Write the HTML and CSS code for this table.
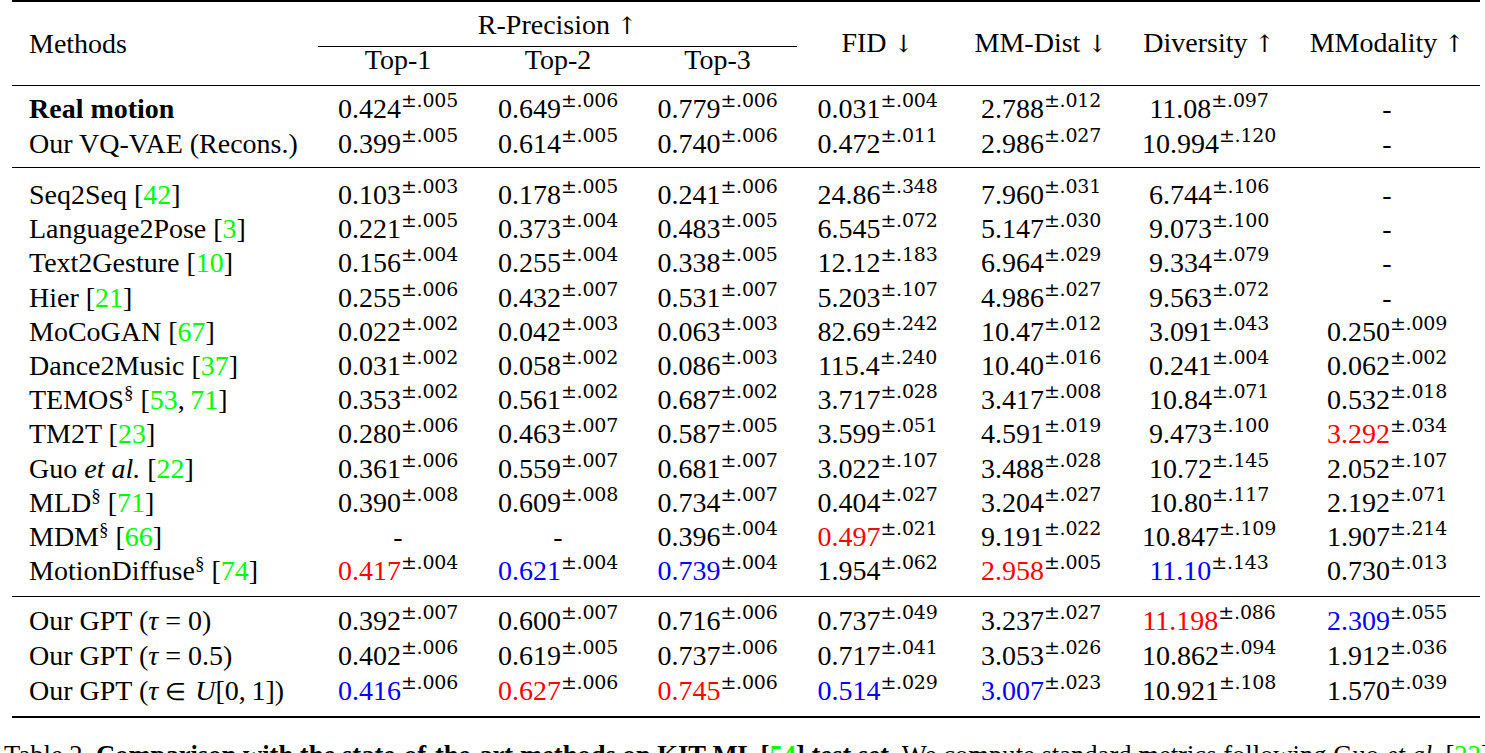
FILE: index.html
```html
<!DOCTYPE html>
<html lang="en">
<head>
<meta charset="utf-8">
<title>Table 2</title>
<link rel="stylesheet" href="styles.css">
</head>
<body>
<div class="page">
<table class="results">
  <colgroup>
    <col class="c-method">
    <col class="c-top1">
    <col class="c-top2">
    <col class="c-top3">
    <col class="c-fid">
    <col class="c-mmd">
    <col class="c-div">
    <col class="c-mmod">
  </colgroup>
  <thead>
    <tr class="h1">
      <th rowspan="2" class="method">Methods</th>
      <th colspan="3" class="group">R-Precision <span class="arr">&#8593;&#xFE0E;</span></th>
      <th rowspan="2">FID <span class="arr">&#8595;&#xFE0E;</span></th>
      <th rowspan="2">MM-Dist <span class="arr">&#8595;&#xFE0E;</span></th>
      <th rowspan="2">Diversity <span class="arr">&#8593;&#xFE0E;</span></th>
      <th rowspan="2">MModality <span class="arr">&#8593;&#xFE0E;</span></th>
    </tr>
    <tr class="h2">
      <th>Top-1</th>
      <th>Top-2</th>
      <th>Top-3</th>
    </tr>
  </thead>
  <tbody class="ga">
    <tr>
      <td class="method"><b>Real motion</b></td>
      <td><span>0.424</span><sup>±.005</sup></td>
      <td><span>0.649</span><sup>±.006</sup></td>
      <td><span>0.779</span><sup>±.006</sup></td>
      <td><span>0.031</span><sup>±.004</sup></td>
      <td><span>2.788</span><sup>±.012</sup></td>
      <td><span>11.08</span><sup>±.097</sup></td>
      <td>-</td>
    </tr>
    <tr>
      <td class="method">Our VQ-VAE (Recons.)</td>
      <td><span>0.399</span><sup>±.005</sup></td>
      <td><span>0.614</span><sup>±.005</sup></td>
      <td><span>0.740</span><sup>±.006</sup></td>
      <td><span>0.472</span><sup>±.011</sup></td>
      <td><span>2.986</span><sup>±.027</sup></td>
      <td><span>10.994</span><sup>±.120</sup></td>
      <td>-</td>
    </tr>
  </tbody>
  <tbody class="gb">
    <tr>
      <td class="method">Seq2Seq [<span class="cite">42</span>]</td>
      <td><span>0.103</span><sup>±.003</sup></td>
      <td><span>0.178</span><sup>±.005</sup></td>
      <td><span>0.241</span><sup>±.006</sup></td>
      <td><span>24.86</span><sup>±.348</sup></td>
      <td><span>7.960</span><sup>±.031</sup></td>
      <td><span>6.744</span><sup>±.106</sup></td>
      <td>-</td>
    </tr>
    <tr>
      <td class="method">Language2Pose [<span class="cite">3</span>]</td>
      <td><span>0.221</span><sup>±.005</sup></td>
      <td><span>0.373</span><sup>±.004</sup></td>
      <td><span>0.483</span><sup>±.005</sup></td>
      <td><span>6.545</span><sup>±.072</sup></td>
      <td><span>5.147</span><sup>±.030</sup></td>
      <td><span>9.073</span><sup>±.100</sup></td>
      <td>-</td>
    </tr>
    <tr>
      <td class="method">Text2Gesture [<span class="cite">10</span>]</td>
      <td><span>0.156</span><sup>±.004</sup></td>
      <td><span>0.255</span><sup>±.004</sup></td>
      <td><span>0.338</span><sup>±.005</sup></td>
      <td><span>12.12</span><sup>±.183</sup></td>
      <td><span>6.964</span><sup>±.029</sup></td>
      <td><span>9.334</span><sup>±.079</sup></td>
      <td>-</td>
    </tr>
    <tr>
      <td class="method">Hier [<span class="cite">21</span>]</td>
      <td><span>0.255</span><sup>±.006</sup></td>
      <td><span>0.432</span><sup>±.007</sup></td>
      <td><span>0.531</span><sup>±.007</sup></td>
      <td><span>5.203</span><sup>±.107</sup></td>
      <td><span>4.986</span><sup>±.027</sup></td>
      <td><span>9.563</span><sup>±.072</sup></td>
      <td>-</td>
    </tr>
    <tr>
      <td class="method">MoCoGAN [<span class="cite">67</span>]</td>
      <td><span>0.022</span><sup>±.002</sup></td>
      <td><span>0.042</span><sup>±.003</sup></td>
      <td><span>0.063</span><sup>±.003</sup></td>
      <td><span>82.69</span><sup>±.242</sup></td>
      <td><span>10.47</span><sup>±.012</sup></td>
      <td><span>3.091</span><sup>±.043</sup></td>
      <td><span>0.250</span><sup>±.009</sup></td>
    </tr>
    <tr>
      <td class="method">Dance2Music [<span class="cite">37</span>]</td>
      <td><span>0.031</span><sup>±.002</sup></td>
      <td><span>0.058</span><sup>±.002</sup></td>
      <td><span>0.086</span><sup>±.003</sup></td>
      <td><span>115.4</span><sup>±.240</sup></td>
      <td><span>10.40</span><sup>±.016</sup></td>
      <td><span>0.241</span><sup>±.004</sup></td>
      <td><span>0.062</span><sup>±.002</sup></td>
    </tr>
    <tr>
      <td class="method">TEMOS<sup class="sec">§</sup> [<span class="cite">53</span>,&#8201;<span class="cite">71</span>]</td>
      <td><span>0.353</span><sup>±.002</sup></td>
      <td><span>0.561</span><sup>±.002</sup></td>
      <td><span>0.687</span><sup>±.002</sup></td>
      <td><span>3.717</span><sup>±.028</sup></td>
      <td><span>3.417</span><sup>±.008</sup></td>
      <td><span>10.84</span><sup>±.071</sup></td>
      <td><span>0.532</span><sup>±.018</sup></td>
    </tr>
    <tr>
      <td class="method">TM2T [<span class="cite">23</span>]</td>
      <td><span>0.280</span><sup>±.006</sup></td>
      <td><span>0.463</span><sup>±.007</sup></td>
      <td><span>0.587</span><sup>±.005</sup></td>
      <td><span>3.599</span><sup>±.051</sup></td>
      <td><span>4.591</span><sup>±.019</sup></td>
      <td><span>9.473</span><sup>±.100</sup></td>
      <td><span class="red">3.292</span><sup>±.034</sup></td>
    </tr>
    <tr>
      <td class="method">Guo <i>et al.</i> [<span class="cite">22</span>]</td>
      <td><span>0.361</span><sup>±.006</sup></td>
      <td><span>0.559</span><sup>±.007</sup></td>
      <td><span>0.681</span><sup>±.007</sup></td>
      <td><span>3.022</span><sup>±.107</sup></td>
      <td><span>3.488</span><sup>±.028</sup></td>
      <td><span>10.72</span><sup>±.145</sup></td>
      <td><span>2.052</span><sup>±.107</sup></td>
    </tr>
    <tr>
      <td class="method">MLD<sup class="sec">§</sup> [<span class="cite">71</span>]</td>
      <td><span>0.390</span><sup>±.008</sup></td>
      <td><span>0.609</span><sup>±.008</sup></td>
      <td><span>0.734</span><sup>±.007</sup></td>
      <td><span>0.404</span><sup>±.027</sup></td>
      <td><span>3.204</span><sup>±.027</sup></td>
      <td><span>10.80</span><sup>±.117</sup></td>
      <td><span>2.192</span><sup>±.071</sup></td>
    </tr>
    <tr>
      <td class="method">MDM<sup class="sec">§</sup> [<span class="cite">66</span>]</td>
      <td>-</td>
      <td>-</td>
      <td><span>0.396</span><sup>±.004</sup></td>
      <td><span class="red">0.497</span><sup>±.021</sup></td>
      <td><span>9.191</span><sup>±.022</sup></td>
      <td><span>10.847</span><sup>±.109</sup></td>
      <td><span>1.907</span><sup>±.214</sup></td>
    </tr>
    <tr>
      <td class="method">MotionDiffuse<sup class="sec">§</sup> [<span class="cite">74</span>]</td>
      <td><span class="red">0.417</span><sup>±.004</sup></td>
      <td><span class="blue">0.621</span><sup>±.004</sup></td>
      <td><span class="blue">0.739</span><sup>±.004</sup></td>
      <td><span>1.954</span><sup>±.062</sup></td>
      <td><span class="red">2.958</span><sup>±.005</sup></td>
      <td><span class="blue">11.10</span><sup>±.143</sup></td>
      <td><span>0.730</span><sup>±.013</sup></td>
    </tr>
  </tbody>
  <tbody class="gc">
    <tr>
      <td class="method">Our GPT (<i class="m">τ</i> = 0)</td>
      <td><span>0.392</span><sup>±.007</sup></td>
      <td><span>0.600</span><sup>±.007</sup></td>
      <td><span>0.716</span><sup>±.006</sup></td>
      <td><span>0.737</span><sup>±.049</sup></td>
      <td><span>3.237</span><sup>±.027</sup></td>
      <td><span class="red">11.198</span><sup>±.086</sup></td>
      <td><span class="blue">2.309</span><sup>±.055</sup></td>
    </tr>
    <tr>
      <td class="method">Our GPT (<i class="m">τ</i> = 0.5)</td>
      <td><span>0.402</span><sup>±.006</sup></td>
      <td><span>0.619</span><sup>±.005</sup></td>
      <td><span>0.737</span><sup>±.006</sup></td>
      <td><span>0.717</span><sup>±.041</sup></td>
      <td><span>3.053</span><sup>±.026</sup></td>
      <td><span>10.862</span><sup>±.094</sup></td>
      <td><span>1.912</span><sup>±.036</sup></td>
    </tr>
    <tr>
      <td class="method">Our GPT (<i class="m">τ</i> <span class="in">∈</span> <i class="cal">U</i>[0,&#8201;1])</td>
      <td><span class="blue">0.416</span><sup>±.006</sup></td>
      <td><span class="red">0.627</span><sup>±.006</sup></td>
      <td><span class="red">0.745</span><sup>±.006</sup></td>
      <td><span class="blue">0.514</span><sup>±.029</sup></td>
      <td><span class="blue">3.007</span><sup>±.023</sup></td>
      <td><span>10.921</span><sup>±.108</sup></td>
      <td><span>1.570</span><sup>±.039</sup></td>
    </tr>
  </tbody>
</table>
<p class="caption">Table 2. <b>Comparison with the state-of-the-art methods on KIT-ML [<span class="cite">54</span>] test set.</b> We compute standard metrics following Guo <i>et al.</i> [<span class="cite">22</span>]</p>
</div>
</body>
</html>
```
FILE: styles.css
```css
html, body {
  margin: 0;
  padding: 0;
  background: #fff;
}
body {
  width: 1485px;
  height: 753px;
  overflow: hidden;
  font-family: "Liberation Serif", "Times New Roman", serif;
  font-size: 28px;
  color: #000;
}
.page {
  display: flow-root;
}
.results {
  margin-left: 12px;
  border-collapse: separate;
  border-spacing: 0;
  table-layout: fixed;
  width: 1468px;
  border-top: 2px solid #000;
  border-bottom: 2px solid #000;
}
.c-method { width: 306px; }
.c-top1 { width: 160px; }
.c-top2 { width: 160px; }
.c-top3 { width: 159px; }
.c-fid { width: 161px; }
.c-mmd { width: 166px; }
.c-div { width: 170px; }
.c-mmod { width: 186px; }

th, td {
  padding: 0;
  text-align: center;
  white-space: nowrap;
  font-weight: normal;
}
th.method, td.method {
  text-align: left;
  padding-left: 17px;
}
thead th {
  vertical-align: middle;
  line-height: 30px;
}
.h1 th {
  padding-top: 8px;
  padding-bottom: 5px;
}
.h1 th[rowspan] {
  padding: 0;
}
.h1 th.method {
  padding-left: 17px;
}
.h1 th.group {
  border-bottom: 1px solid #000;
  vertical-align: top;
}
.h2 th {
  line-height: 24px;
  padding-top: 1px;
  padding-bottom: 13px;
  vertical-align: top;
}
.arr {
  font-family: "DejaVu Serif", "DejaVu Sans", serif;
  font-size: 24px;
  font-variant-emoji: text;
  color: #000;
}

tbody td {
  vertical-align: top;
}
.ga td, .gc td { line-height: 35px; }
.gb td { line-height: 34.2px; }

.ga tr:first-child td,
.gb tr:first-child td,
.gc tr:first-child td {
  border-top: 1px solid #000;
}
.ga tr:first-child td { padding-top: 5px; }
.ga tr:last-child td { padding-bottom: 6px; }
.gb tr:first-child td { padding-top: 10px; }
.gb tr:last-child td { padding-bottom: 7.6px; }
.gc tr:first-child td { padding-top: 6px; }
.gc tr:last-child td { padding-bottom: 6px; }

sup {
  font-family: "DejaVu Serif", "Liberation Serif", serif;
  font-size: 19px;
  line-height: 0;
  vertical-align: 11px;
  letter-spacing: -0.2px;
}
sup.sec {
  font-family: "Liberation Serif", serif;
  font-size: 19px;
  vertical-align: 10px;
  letter-spacing: 0;
}
.cite { color: #00ff00; }
.red { color: #ff0000; }
.blue { color: #0000ff; }
i.m { font-style: italic; }
i.cal { font-style: italic; padding-left: 2px; }
.in { font-size: 24px; }

.caption {
  margin: 20px 0 0 4px;
  font-size: 26.6px;
  line-height: 34px;
  white-space: nowrap;
}
```
